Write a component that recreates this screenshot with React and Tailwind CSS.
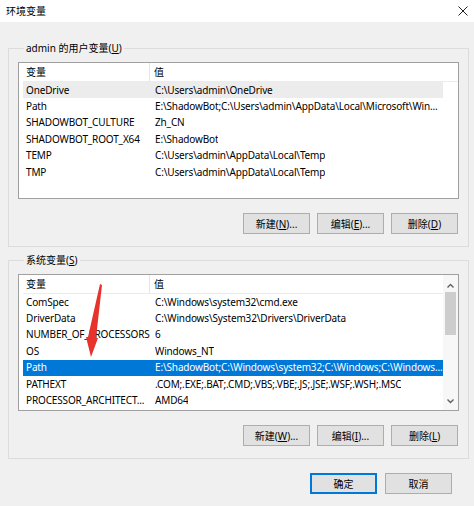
import React from 'react';

const userVars = [
  ['OneDrive', 'C:\\Users\\admin\\OneDrive'],
  ['Path', 'E:\\ShadowBot;C:\\Users\\admin\\AppData\\Local\\Microsoft\\Win...'],
  ['SHADOWBOT_CULTURE', 'Zh_CN'],
  ['SHADOWBOT_ROOT_X64', 'E:\\ShadowBot'],
  ['TEMP', 'C:\\Users\\admin\\AppData\\Local\\Temp'],
  ['TMP', 'C:\\Users\\admin\\AppData\\Local\\Temp'],
];

const sysVars = [
  ['ComSpec', 'C:\\Windows\\system32\\cmd.exe'],
  ['DriverData', 'C:\\Windows\\System32\\Drivers\\DriverData'],
  ['NUMBER_OF_PROCESSORS', '6'],
  ['OS', 'Windows_NT'],
  ['Path', 'E:\\ShadowBot;C:\\Windows\\system32;C:\\Windows;C:\\Windows...'],
  ['PATHEXT', '.COM;.EXE;.BAT;.CMD;.VBS;.VBE;.JS;.JSE;.WSF;.WSH;.MSC'],
  ['PROCESSOR_ARCHITECT...', 'AMD64'],
];

function Btn({ label, k, dots, primary }) {
  return (
    <button
      className={
        'w-[67px] h-[21px] bg-[#e1e1e1] text-[10px] leading-none text-black flex items-center justify-center ' +
        (primary ? 'border-2 border-[#0078d7]' : 'border border-[#adadad]')
      }
    >
      {label}
      {k && (
        <>
          (<span className="underline">{k}</span>)
        </>
      )}
      {dots && '...'}
    </button>
  );
}

function VarList({ rows, hover, selected, scroll }) {
  return (
    <div className="relative h-[137px] bg-white border border-[#a0a0a0] overflow-hidden">
      <div className="flex h-[19px] items-center border-b border-[#ececec] ml-[4px]">
        <div className="w-[127px] pl-[3px] border-r border-[#e5e5e5] h-full flex items-center">变量</div>
        <div className="pl-[4px]">值</div>
      </div>
      <div className="ml-[4px] mr-[15px] tracking-[-0.15px]">
        {rows.map(([n, v], i) => (
          <div
            key={n}
            className={
              'flex h-[16.4px] items-center whitespace-nowrap overflow-hidden ' +
              (i === selected ? 'bg-[#0078d7] text-white' : i === hover ? 'bg-[#ececec]' : '')
            }
          >
            <div className="w-[128px] shrink-0 pl-[3px] overflow-hidden">{n}</div>
            <div className="pl-[4px] min-w-0 overflow-hidden text-ellipsis">{v}</div>
          </div>
        ))}
      </div>
      {scroll && (
        <div className="absolute right-0 top-0 bottom-0 w-[15px] bg-[#f7f7f7] flex flex-col items-center">
          <svg width="9" height="10" viewBox="0 0 9 10" className="mt-[6px]">
            <path d="M1.5 6.5 L4.5 3.5 L7.5 6.5" fill="none" stroke="#606060" strokeWidth="1.4" />
          </svg>
          <div className="w-[11px] h-[43px] bg-[#cdcdcd] mt-[1px]" />
          <div className="flex-1" />
          <svg width="9" height="10" viewBox="0 0 9 10" className="mb-[4px]">
            <path d="M1.5 3.5 L4.5 6.5 L7.5 3.5" fill="none" stroke="#606060" strokeWidth="1.4" />
          </svg>
        </div>
      )}
    </div>
  );
}

function Group({ title, k, children }) {
  return (
    <fieldset className="ml-[8px] w-[461px] min-w-0 border border-[#dcdcdc] px-[9px] pt-[6px] pb-[12px]">
      <legend className="ml-[6px] px-[2px] leading-[16px]">
        {title}(<span className="underline">{k}</span>)
      </legend>
      {children}
    </fieldset>
  );
}

export default function App() {
  return (
    <div
      className="relative w-[474px] h-[506px] bg-[#f0f0f0] text-[10px] text-black overflow-hidden"
      style={{ fontFamily: '"Noto Sans", "Noto Sans CJK SC", sans-serif' }}
    >
      <div className="h-[22px] bg-white flex items-center justify-between pl-[6px] pr-[5px]">
        <span>环境变量</span>
        <svg width="12" height="12" viewBox="0 0 12 12">
          <path d="M1.5 1.5 L10.5 10.5 M10.5 1.5 L1.5 10.5" stroke="#222" strokeWidth="1" />
        </svg>
      </div>

      <div className="mt-[18px]">
        <Group title="admin 的用户变量" k="U">
          <VarList rows={userVars} hover={0} />
          <div className="flex justify-end gap-[7px] mt-[14px] pr-[1px]">
            <Btn label="新建" k="N" dots />
            <Btn label="编辑" k="E" dots />
            <Btn label="删除" k="D" />
          </div>
        </Group>
      </div>

      <div className="mt-[5px]">
        <Group title="系统变量" k="S">
          <VarList rows={sysVars} selected={4} scroll />
          <div className="flex justify-end gap-[7px] mt-[14px] pr-[1px]">
            <Btn label="新建" k="W" dots />
            <Btn label="编辑" k="I" dots />
            <Btn label="删除" k="L" />
          </div>
        </Group>
      </div>

      <div className="flex justify-end gap-[8px] mt-[14px] pr-[22px]">
        <Btn label="确定" primary />
        <Btn label="取消" />
      </div>

      <svg className="absolute left-0 top-0 pointer-events-none" width="474" height="506" viewBox="0 0 474 506">
        <path d="M100 284 L102 285 L96 338 L98 338 L91 357 L86 337 L88 337 Z" fill="#e8322c" />
      </svg>
    </div>
  );
}
